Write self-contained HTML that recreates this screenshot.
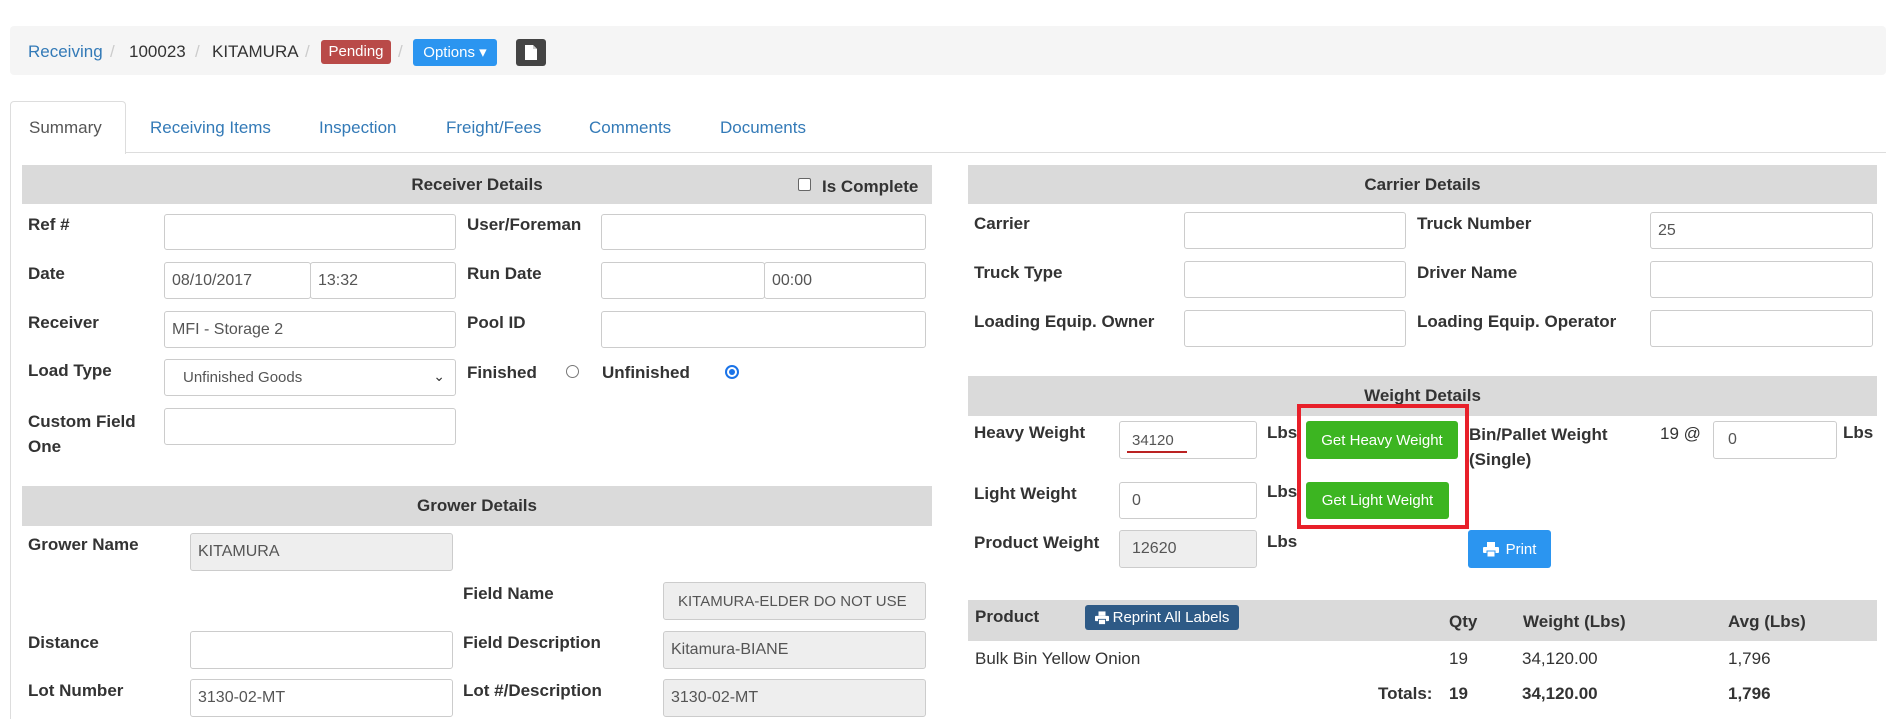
<!DOCTYPE html>
<html><head><meta charset="utf-8"><style>
*{box-sizing:border-box;margin:0;padding:0}
body{width:1886px;height:719px;overflow:hidden;background:#fff;font-family:"Liberation Sans",Arial,sans-serif;font-size:17px;color:#333;position:relative}
.a{position:absolute}
.lbl{position:absolute;font-weight:bold;color:#333;font-size:17px;line-height:22px}
.inp{position:absolute;border:1px solid #ccc;border-radius:3px;background:#fff;font-size:16px;color:#555;padding-left:7px;display:flex;align-items:center}
.dis{background:#eee}
.hdr{position:absolute;background:#dadada;font-weight:bold;text-align:center;font-size:17px;color:#333}
.tab{position:absolute;top:118px;color:#337ab7;font-size:17px}
.btn{position:absolute;color:#fff;border-radius:3px;font-size:15px;display:flex;align-items:center;justify-content:center}
.bc{position:absolute;top:41px;line-height:22px;font-size:17px;white-space:nowrap}
.sl{color:#ccc}
</style></head><body>
<div class="a" style="left:10px;top:26px;width:1876px;height:49px;background:#f5f5f5;border-radius:4px"></div>
<div class="bc" style="left:28px;color:#337ab7">Receiving</div>
<div class="bc sl" style="left:110px">/</div>
<div class="bc" style="left:129px">100023</div>
<div class="bc sl" style="left:195px">/</div>
<div class="bc" style="left:212px">KITAMURA</div>
<div class="bc sl" style="left:305px">/</div>
<div class="a" style="left:321px;top:40px;width:70px;height:24px;background:#b94a48;color:#fff;border-radius:3px;font-size:15px;text-align:center;line-height:24px">Pending</div>
<div class="bc sl" style="left:398px">/</div>
<div class="a" style="left:413px;top:39px;width:84px;height:27px;background:#2b95f0;color:#fff;border-radius:3px;font-size:15px;text-align:center;line-height:27px">Options ▾</div>
<div class="a" style="left:516px;top:39px;width:30px;height:27px;background:#444;border-radius:3px">
<svg class="a" style="left:9px;top:6px" width="12" height="15" viewBox="0 0 12 15"><path d="M0 0H8L12 4V15H0Z" fill="#fff"/><path d="M8 0V4H12" fill="#ccc"/></svg></div>

<div class="a" style="left:10px;top:152px;width:1876px;height:1px;background:#ddd"></div>
<div class="a" style="left:10px;top:101px;width:116px;height:53px;border:1px solid #ddd;border-bottom:none;background:#fff;border-radius:4px 4px 0 0"></div>
<div class="a" style="left:10px;top:153px;width:1px;height:566px;background:#ddd"></div>
<div class="tab" style="left:29px;color:#555">Summary</div>
<div class="tab" style="left:150px">Receiving Items</div>
<div class="tab" style="left:319px">Inspection</div>
<div class="tab" style="left:446px">Freight/Fees</div>
<div class="tab" style="left:589px">Comments</div>
<div class="tab" style="left:720px">Documents</div>

<div class="hdr" style="left:22px;top:165px;width:910px;height:39px;line-height:39px">Receiver Details</div>
<div class="a" style="left:798px;top:178px;width:13px;height:13px;border:1px solid #666;border-radius:2px;background:#fff"></div>
<div class="lbl" style="left:822px;top:176px">Is Complete</div>

<div class="lbl" style="left:28px;top:214px">Ref #</div>
<div class="inp" style="left:164px;top:214px;width:292px;height:36px"></div>
<div class="lbl" style="left:467px;top:214px">User/Foreman</div>
<div class="inp" style="left:601px;top:214px;width:325px;height:36px"></div>

<div class="lbl" style="left:28px;top:263px">Date</div>
<div class="inp" style="left:164px;top:262px;width:147px;height:37px">08/10/2017</div>
<div class="inp" style="left:310px;top:262px;width:146px;height:37px">13:32</div>
<div class="lbl" style="left:467px;top:263px">Run Date</div>
<div class="inp" style="left:601px;top:262px;width:164px;height:37px"></div>
<div class="inp" style="left:764px;top:262px;width:162px;height:37px">00:00</div>

<div class="lbl" style="left:28px;top:312px">Receiver</div>
<div class="inp" style="left:164px;top:311px;width:292px;height:37px">MFI - Storage 2</div>
<div class="lbl" style="left:467px;top:312px">Pool ID</div>
<div class="inp" style="left:601px;top:311px;width:325px;height:37px"></div>

<div class="lbl" style="left:28px;top:360px">Load Type</div>
<div class="inp" style="left:164px;top:359px;width:292px;height:37px;padding-left:18px;font-size:15px;color:#555">Unfinished Goods<span class="a" style="right:10px;top:8px;font-size:14px;color:#333">⌄</span></div>
<div class="lbl" style="left:467px;top:362px">Finished</div>
<div class="a" style="left:566px;top:365px;width:13px;height:13px;border:1px solid #777;border-radius:50%"></div>
<div class="lbl" style="left:602px;top:362px">Unfinished</div>
<div class="a" style="left:725px;top:365px;width:14px;height:14px;border:2px solid #1a73e8;border-radius:50%;background:#fff"><div class="a" style="left:2px;top:2px;width:6px;height:6px;border-radius:50%;background:#1a73e8"></div></div>

<div class="lbl" style="left:28px;top:409px;line-height:25px">Custom Field<br>One</div>
<div class="inp" style="left:164px;top:408px;width:292px;height:37px"></div>

<div class="hdr" style="left:22px;top:486px;width:910px;height:40px;line-height:40px">Grower Details</div>
<div class="lbl" style="left:28px;top:534px">Grower Name</div>
<div class="inp dis" style="left:190px;top:533px;width:263px;height:38px">KITAMURA</div>
<div class="lbl" style="left:463px;top:583px">Field Name</div>
<div class="inp dis" style="left:663px;top:582px;width:263px;height:38px;padding-left:14px;font-size:15px">KITAMURA-ELDER DO NOT USE</div>
<div class="lbl" style="left:28px;top:632px">Distance</div>
<div class="inp" style="left:190px;top:631px;width:263px;height:38px"></div>
<div class="lbl" style="left:463px;top:632px">Field Description</div>
<div class="inp dis" style="left:663px;top:631px;width:263px;height:38px">Kitamura-BIANE</div>
<div class="lbl" style="left:28px;top:680px">Lot Number</div>
<div class="inp" style="left:190px;top:679px;width:263px;height:38px">3130-02-MT</div>
<div class="lbl" style="left:463px;top:680px">Lot #/Description</div>
<div class="inp dis" style="left:663px;top:679px;width:263px;height:38px">3130-02-MT</div>

<div class="hdr" style="left:968px;top:165px;width:909px;height:39px;line-height:39px">Carrier Details</div>
<div class="lbl" style="left:974px;top:213px">Carrier</div>
<div class="inp" style="left:1184px;top:212px;width:222px;height:37px"></div>
<div class="lbl" style="left:1417px;top:213px">Truck Number</div>
<div class="inp" style="left:1650px;top:212px;width:223px;height:37px">25</div>
<div class="lbl" style="left:974px;top:262px">Truck Type</div>
<div class="inp" style="left:1184px;top:261px;width:222px;height:37px"></div>
<div class="lbl" style="left:1417px;top:262px">Driver Name</div>
<div class="inp" style="left:1650px;top:261px;width:223px;height:37px"></div>
<div class="lbl" style="left:974px;top:311px">Loading Equip. Owner</div>
<div class="inp" style="left:1184px;top:310px;width:222px;height:37px"></div>
<div class="lbl" style="left:1417px;top:311px">Loading Equip. Operator</div>
<div class="inp" style="left:1650px;top:310px;width:223px;height:37px"></div>

<div class="hdr" style="left:968px;top:376px;width:909px;height:40px;line-height:40px">Weight Details</div>
<div class="lbl" style="left:974px;top:422px">Heavy Weight</div>
<div class="inp" style="left:1119px;top:421px;width:138px;height:38px;padding-left:12px;font-size:15px">34120<div class="a" style="left:7px;top:29px;width:60px;height:2px;background:#b22"></div></div>
<div class="lbl" style="left:1267px;top:422px">Lbs</div>
<div class="btn" style="left:1306px;top:421px;width:152px;height:38px;background:#3cb521">Get Heavy Weight</div>
<div class="lbl" style="left:1469px;top:422px;line-height:25px">Bin/Pallet Weight<br>(Single)</div>
<div class="a" style="left:1660px;top:423px;line-height:22px">19 @</div>
<div class="inp" style="left:1713px;top:421px;width:124px;height:38px;padding-left:14px">0</div>
<div class="lbl" style="left:1843px;top:422px">Lbs</div>
<div class="lbl" style="left:974px;top:483px">Light Weight</div>
<div class="inp" style="left:1119px;top:482px;width:138px;height:37px;padding-left:12px">0</div>
<div class="lbl" style="left:1267px;top:481px">Lbs</div>
<div class="btn" style="left:1306px;top:482px;width:143px;height:37px;background:#3cb521">Get Light Weight</div>
<div class="a" style="left:1297px;top:404px;width:172px;height:125px;border:4px solid #e8202a"></div>
<div class="lbl" style="left:974px;top:532px">Product Weight</div>
<div class="inp dis" style="left:1119px;top:530px;width:138px;height:38px;padding-left:12px">12620</div>
<div class="lbl" style="left:1267px;top:531px">Lbs</div>
<div class="btn" style="left:1468px;top:530px;width:83px;height:38px;background:#2b95f0">
<svg width="16" height="15" viewBox="0 0 16 15" style="margin-right:7px"><rect x="4" y="0" width="8" height="5" fill="#fff"/><rect x="0" y="5" width="16" height="6" rx="1" fill="#fff"/><rect x="4" y="9" width="8" height="6" fill="#fff" stroke="#2b95f0" stroke-width="1"/></svg>Print</div>

<div class="a" style="left:968px;top:600px;width:909px;height:41px;background:#dadada"></div>
<div class="lbl" style="left:975px;top:606px">Product</div>
<div class="btn" style="left:1085px;top:605px;width:154px;height:25px;background:#2e5a86;font-size:15px">
<svg width="14" height="14" viewBox="0 0 16 15" style="margin-right:4px"><rect x="4" y="0" width="8" height="5" fill="#fff"/><rect x="0" y="5" width="16" height="6" rx="1" fill="#fff"/><rect x="4" y="9" width="8" height="6" fill="#fff" stroke="#2e5a86" stroke-width="1"/></svg>Reprint All Labels</div>
<div class="lbl" style="left:1449px;top:611px">Qty</div>
<div class="lbl" style="left:1523px;top:611px">Weight (Lbs)</div>
<div class="lbl" style="left:1728px;top:611px">Avg (Lbs)</div>
<div class="a" style="left:975px;top:648px;line-height:22px">Bulk Bin Yellow Onion</div>
<div class="a" style="left:1449px;top:648px;line-height:22px">19</div>
<div class="a" style="left:1522px;top:648px;line-height:22px">34,120.00</div>
<div class="a" style="left:1728px;top:648px;line-height:22px">1,796</div>
<div class="lbl" style="left:1378px;top:683px">Totals:</div>
<div class="lbl" style="left:1449px;top:683px">19</div>
<div class="lbl" style="left:1522px;top:683px">34,120.00</div>
<div class="lbl" style="left:1728px;top:683px">1,796</div>
</body></html>
